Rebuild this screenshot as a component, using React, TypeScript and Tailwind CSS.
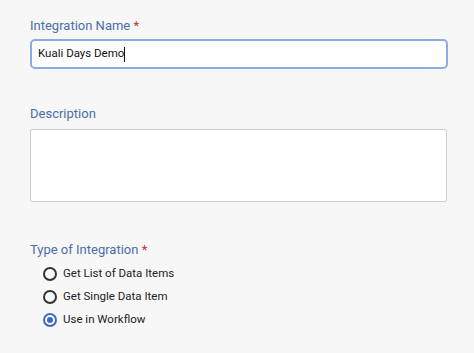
import React from "react";

const Radio = ({ checked, label }: { checked?: boolean; label: string }) => (
  <div className="flex items-center h-[23px]">
    <div className="ml-[13px] w-[14px] h-[14px] flex items-center justify-center">
      {checked ? (
        <div className="w-[14px] h-[14px] rounded-full border-[2px] border-[#3e6bbf] flex items-center justify-center">
          <div className="w-[6px] h-[6px] rounded-full bg-[#3e6bbf]" />
        </div>
      ) : (
        <div className="w-[14px] h-[14px] rounded-full border-[2px] border-[#333]" />
      )}
    </div>
    <span className="ml-[6px] text-[11.5px] text-[#222]">{label}</span>
  </div>
);

export default function App() {
  return (
    <div
      className="w-[474px] h-[353px] bg-[#f7f7f7] pl-[30px] pr-[26px] pt-[16px] flex flex-col"
      style={{ fontFamily: "Roboto, 'Liberation Sans', sans-serif" }}
    >
      <div className="h-[20px] leading-[20px] text-[13px] text-[#4a6ea8]">
        Integration Name <span className="text-[#c0392b]">*</span>
      </div>
      <div className="mt-[3px] h-[30px] w-[418px] rounded-[5px] border-[2px] border-[#8eaae3] bg-white flex items-center pl-[6px]">
        <span className="text-[11.5px] text-[#111]">Kuali Days Demo</span>
        <span className="w-[1px] h-[15px] bg-[#111]" />
      </div>
      <div className="mt-[35px] h-[20px] leading-[20px] text-[13px] text-[#4a6ea8]">Description</div>
      <div className="mt-[5px] h-[73px] w-[417px] rounded-[2px] border border-[#cfcfcf] bg-white" />
      <div className="mt-[38px] h-[20px] leading-[20px] text-[13px] text-[#4a6ea8]">
        Type of Integration <span className="text-[#c0392b]">*</span>
      </div>
      <div className="mt-[2px] flex flex-col">
        <Radio label="Get List of Data Items" />
        <Radio label="Get Single Data Item" />
        <Radio checked label="Use in Workflow" />
      </div>
    </div>
  );
}
